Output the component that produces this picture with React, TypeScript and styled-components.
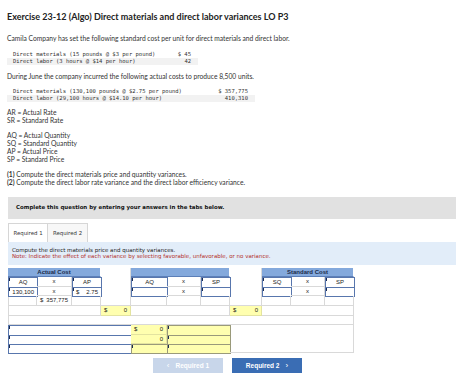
import React from "react";
import styled, { createGlobalStyle, css } from "styled-components";

const GlobalStyle = createGlobalStyle`
  html, body { margin: 0; padding: 0; background: #fff; }
  body { font-family: Lato, "Open Sans", sans-serif; color: #222; }
  * { box-sizing: border-box; }
`;

const Page = styled.div`
  width: 474px;
  padding: 11px 18px 0 7px;
`;

const Title = styled.h1`
  margin: 0;
  font-family: Lato, sans-serif;
  font-weight: 700;
  font-size: 9px;
  line-height: 12px;
  color: #222;
`;

const Para = styled.p<{ $mt: number }>`
  margin: ${(p) => p.$mt}px 0 0 0;
  font-size: 6.7px;
  line-height: 8px;
  color: #333;
`;

const Lines = styled.div<{ $mt: number }>`
  margin-top: ${(p) => p.$mt}px;
  font-size: 6.7px;
  line-height: 7.7px;
  color: #333;
  b { font-weight: 700; }
`;

const MonoTable = styled.div<{ $w: number; $mt: number }>`
  margin-top: ${(p) => p.$mt}px;
  width: ${(p) => p.$w}px;
  font-family: "DejaVu Sans Mono", "Liberation Mono", monospace;
  font-size: 5.5px;
  color: #333;
`;

const MonoRow = styled.div<{ $striped?: boolean }>`
  display: flex;
  justify-content: space-between;
  height: 7px;
  line-height: 7px;
  padding: 0 7px 0 6px;
  white-space: pre;
  background: ${(p) => (p.$striped ? "#f2f2f2" : "transparent")};
`;

const GreyBox = styled.div`
  margin-top: 10px;
  margin-left: 1px;
  width: 448px;
  height: 22px;
  background: #e1e1e1;
  padding: 7px 0 0 8px;
  font-family: Verdana, "DejaVu Sans", sans-serif;
  font-weight: 700;
  font-size: 5.45px;
  line-height: 6px;
  color: #111;
`;

const Tabs = styled.div`
  display: flex;
  margin: 4px 0 0 1px;
`;

const Tab = styled.div<{ $active?: boolean }>`
  width: 40px;
  height: 19px;
  display: flex;
  align-items: center;
  justify-content: center;
  font-family: Verdana, "DejaVu Sans", sans-serif;
  font-size: 5.4px;
  color: #333;
  border: 1px solid #d6d6d6;
  border-bottom: none;
  background: ${(p) => (p.$active ? "#fff" : "#f7f7f7")};
  & + & { border-left: none; }
`;

const InfoBox = styled.div`
  margin-left: 1px;
  width: 448px;
  height: 23px;
  background: #e2edf9;
  padding: 5px 0 0 4px;
  font-family: Verdana, "DejaVu Sans", sans-serif;
  font-size: 5.5px;
  line-height: 6.4px;
  color: #222;
`;

const Note = styled.div`
  color: #b4312b;
`;

const Grid = styled.div`
  margin: 3px 0 0 1px;
  display: grid;
  grid-template-columns: 29px 35px 29px 30px 36px 34px 29px 32px 29px 34px 29px;
  grid-template-rows: 9px 10px 9px 10px 10px 9px 10px 9px 9px;
  width: 346px;
  font-family: "Liberation Sans", Arial, sans-serif;
  font-size: 6px;
  color: #222;
`;

type Kind = "head" | "plain" | "input" | "yellow" | "yinput";

const Cell = styled.div<{
  $c: string;
  $r: string;
  $kind: Kind;
  $align?: "left" | "center" | "right" | "split";
}>`
  grid-column: ${(p) => p.$c};
  grid-row: ${(p) => p.$r};
  position: relative;
  display: flex;
  align-items: center;
  padding: 0 3px;
  white-space: nowrap;
  justify-content: ${(p) =>
    p.$align === "right"
      ? "flex-end"
      : p.$align === "split"
      ? "space-between"
      : p.$align === "left"
      ? "flex-start"
      : "center"};
  border-right: 1px solid #d9d9d9;
  border-bottom: 1px solid #d9d9d9;
  ${(p) =>
    p.$kind === "head" &&
    css`
      background: #84a9dc;
      font-weight: 700;
      color: #1b2b4a;
      border-right: 1px solid #fff;
      border-bottom: 1px solid #5c7fb8;
    `}
  ${(p) =>
    p.$kind === "input" &&
    css`
      border: 1px solid #5876ad;
      margin: 0 -1px -1px 0;
    `}
  ${(p) =>
    p.$kind === "yellow" &&
    css`
      background: #ffffaf;
      border-right: 1px solid #e3e3a0;
      border-bottom: 1px solid #e3e3a0;
    `}
  ${(p) =>
    p.$kind === "yinput" &&
    css`
      background: #ffffaf;
      border: 1px solid #9a9a7a;
      margin: 0 -1px -1px 0;
    `}
  ${(p) =>
    (p.$kind === "input" || p.$kind === "yinput") &&
    css`
      &::before {
        content: "";
        position: absolute;
        left: 0;
        top: 0;
        width: 1px;
        height: 3px;
        background: #1c2c50;
      }
    `}
`;

const LeftEdge = styled.div<{ $r: string }>`
  grid-column: 1;
  grid-row: ${(p) => p.$r};
  border-left: 1px solid #d9d9d9;
  pointer-events: none;
`;

const Buttons = styled.div`
  display: flex;
  gap: 9px;
  margin: 5px 0 0 146px;
`;

const Btn = styled.div<{ $primary?: boolean }>`
  width: 70px;
  height: 15px;
  display: flex;
  align-items: center;
  justify-content: center;
  gap: 6px;
  font-family: "Liberation Sans", Arial, sans-serif;
  font-weight: 700;
  font-size: 6.5px;
  color: #fff;
  background: ${(p) => (p.$primary ? "#3a6db4" : "#c8d6ea")};
`;

const Chev = styled.span`
  font-weight: 400;
  font-size: 8px;
`;

export default function App() {
  return (
    <>
      <GlobalStyle />
      <Page>
        <Title>Exercise 23-12 (Algo) Direct materials and direct labor variances LO P3</Title>
        <Para $mt={11}>
          Camila Company has set the following standard cost per unit for direct materials and direct labor.
        </Para>
        <MonoTable $w={191} $mt={8.5}>
          <MonoRow>
            <span>Direct materials (15 pounds @ $3 per pound)</span>
            <span>$ 45</span>
          </MonoRow>
          <MonoRow $striped>
            <span>Direct labor (3 hours @ $14 per hour)</span>
            <span>42</span>
          </MonoRow>
        </MonoTable>
        <Para $mt={7.5}>During June the company incurred the following actual costs to produce 8,500 units.</Para>
        <MonoTable $w={248} $mt={7.5}>
          <MonoRow>
            <span>Direct materials (130,100 pounds @ $2.75 per pound)</span>
            <span>$ 357,775</span>
          </MonoRow>
          <MonoRow $striped>
            <span>Direct labor (29,100 hours @ $14.10 per hour)</span>
            <span>410,310</span>
          </MonoRow>
        </MonoTable>
        <Lines $mt={7.5}>
          <div>AR = Actual Rate</div>
          <div>SR = Standard Rate</div>
        </Lines>
        <Lines $mt={8}>
          <div>AQ = Actual Quantity</div>
          <div>SQ = Standard Quantity</div>
          <div>AP = Actual Price</div>
          <div>SP = Standard Price</div>
        </Lines>
        <Lines $mt={8}>
          <div>
            <b>(1)</b> Compute the direct materials price and quantity variances.
          </div>
          <div>
            <b>(2)</b> Compute the direct labor rate variance and the direct labor efficiency variance.
          </div>
        </Lines>
        <GreyBox>Complete this question by entering your answers in the tabs below.</GreyBox>
        <Tabs>
          <Tab $active>Required 1</Tab>
          <Tab>Required 2</Tab>
        </Tabs>
        <InfoBox>
          <div>Compute the direct materials price and quantity variances.</div>
          <Note>Note: Indicate the effect of each variance by selecting favorable, unfavorable, or no variance.</Note>
        </InfoBox>
        <Grid>
          <Cell $c="1 / 4" $r="1" $kind="head">Actual Cost</Cell>
          <Cell $c="4" $r="1 / 5" $kind="plain" />
          <Cell $c="5 / 8" $r="1" $kind="head" />
          <Cell $c="8" $r="1 / 5" $kind="plain" />
          <Cell $c="9 / 12" $r="1" $kind="head">Standard Cost</Cell>

          <Cell $c="1" $r="2" $kind="input">AQ</Cell>
          <Cell $c="2" $r="2" $kind="plain">x</Cell>
          <Cell $c="3" $r="2" $kind="input">AP</Cell>
          <Cell $c="5" $r="2" $kind="input">AQ</Cell>
          <Cell $c="6" $r="2" $kind="plain">x</Cell>
          <Cell $c="7" $r="2" $kind="input">SP</Cell>
          <Cell $c="9" $r="2" $kind="input">SQ</Cell>
          <Cell $c="10" $r="2" $kind="plain">x</Cell>
          <Cell $c="11" $r="2" $kind="input">SP</Cell>

          <Cell $c="1" $r="3" $kind="input" $align="right">130,100</Cell>
          <Cell $c="2" $r="3" $kind="plain">x</Cell>
          <Cell $c="3" $r="3" $kind="input" $align="split">
            <span>$</span>
            <span>2.75</span>
          </Cell>
          <Cell $c="5" $r="3" $kind="input" />
          <Cell $c="6" $r="3" $kind="plain">x</Cell>
          <Cell $c="7" $r="3" $kind="input" />
          <Cell $c="9" $r="3" $kind="input" />
          <Cell $c="10" $r="3" $kind="plain">x</Cell>
          <Cell $c="11" $r="3" $kind="input" />

          <Cell $c="1" $r="4" $kind="plain" />
          <Cell $c="2" $r="4" $kind="plain" $align="split">
            <span>$</span>
            <span>357,775</span>
          </Cell>
          <Cell $c="3" $r="4" $kind="plain" />
          <Cell $c="5" $r="4" $kind="plain" />
          <Cell $c="6" $r="4" $kind="plain" />
          <Cell $c="7" $r="4" $kind="plain" />
          <Cell $c="9" $r="4" $kind="plain" />
          <Cell $c="10" $r="4" $kind="plain" />
          <Cell $c="11" $r="4" $kind="plain" />

          <Cell $c="1 / 4" $r="5" $kind="plain" />
          <Cell $c="4" $r="5" $kind="yellow" $align="split">
            <span>$</span>
            <span>0</span>
          </Cell>
          <Cell $c="5 / 8" $r="5" $kind="plain" />
          <Cell $c="8" $r="5" $kind="yellow" $align="split">
            <span>$</span>
            <span>0</span>
          </Cell>
          <Cell $c="9 / 12" $r="5" $kind="plain" />

          <Cell $c="1 / 12" $r="6" $kind="plain" />

          <Cell $c="1 / 5" $r="7" $kind="input" />
          <Cell $c="5" $r="7" $kind="yellow" $align="split">
            <span>$</span>
            <span>0</span>
          </Cell>
          <Cell $c="6 / 8" $r="7" $kind="yinput" />
          <Cell $c="1 / 5" $r="8" $kind="input" />
          <Cell $c="5" $r="8" $kind="yellow" $align="right">0</Cell>
          <Cell $c="6 / 8" $r="8" $kind="yinput" />
          <Cell $c="1 / 5" $r="9" $kind="input" />
          <Cell $c="5" $r="9" $kind="yinput" />
          <Cell $c="6 / 8" $r="9" $kind="yinput" />
          <Cell $c="8 / 12" $r="7 / 10" $kind="plain" />

          <LeftEdge $r="2 / 7" />
        </Grid>
        <Buttons>
          <Btn>
            <Chev>&lsaquo;</Chev>
            <span>Required 1</span>
          </Btn>
          <Btn $primary>
            <span>Required 2</span>
            <Chev>&rsaquo;</Chev>
          </Btn>
        </Buttons>
      </Page>
    </>
  );
}
